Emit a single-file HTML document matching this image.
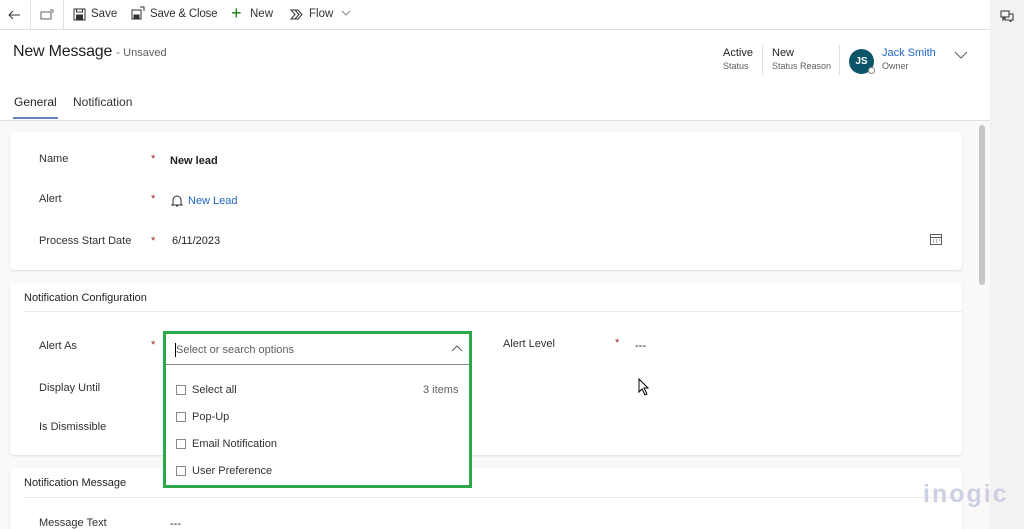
<!DOCTYPE html>
<html><head><style>
*{margin:0;padding:0;box-sizing:border-box}
html,body{width:1024px;height:529px;overflow:hidden}
body{font-family:"Liberation Sans",sans-serif;background:#faf9f8;position:relative;color:#323130}
.a{position:absolute}
.side{left:990px;top:0;width:34px;height:529px;background:#f3f2f1}
.top{left:0;top:0;width:990px;height:121px;background:#fff}
.cmd{left:0;top:0;width:990px;height:30px;border-bottom:1px solid #e1dfdd;font-size:11.5px;color:#323130}
.card{background:#fff;border-radius:4px;box-shadow:0 1px 2px rgba(0,0,0,.12)}
.lbl{font-size:11px;color:#323130}
.req{font-size:11px;color:#a4262c}
.val{font-size:11px;color:#201f1e}
.cb{width:10px;height:10px;border:1px solid #8a8886;left:10px}
</style></head><body>
<div class="a top"></div>
<div class="a side"></div>
<svg class="a" style="left:1000px;top:10px" width="14" height="12" viewBox="0 0 14 12" fill="none" stroke="#323130" stroke-width="1"><rect x="1" y="1" width="8" height="6"/><path d="M3 7v3l2-3"/><path d="M9 4h4v6h-2v2l-2-2H5V7"/></svg>
<div class="a cmd">
 <svg class="a" style="left:7px;top:8px" width="14" height="14" fill="none" stroke="#323130"><path d="M13 7H2M6 3L2 7l4 4"/></svg>
 <div class="a" style="left:30px;top:0;width:1px;height:30px;background:#e1dfdd"></div>
 <svg class="a" style="left:40px;top:9px" width="14" height="12" fill="none" stroke="#605e5c"><rect x="1" y="3" width="10" height="7"/><path d="M10 1l3 0M13 1v3"/></svg>
 <div class="a" style="left:63px;top:0;width:1px;height:30px;background:#e1dfdd"></div>
 <svg class="a" style="left:73px;top:8px" width="13" height="13" fill="none" stroke="#323130"><rect x="1" y="1" width="11" height="11"/><rect x="3.5" y="7" width="6" height="5" fill="#323130"/><rect x="3.5" y="1" width="6" height="3"/></svg>
 <span class="a" style="left:91px;top:8px">Save</span>
 <svg class="a" style="left:131px;top:6px" width="14" height="14" fill="none" stroke="#323130"><rect x="1" y="4" width="9" height="9"/><rect x="3" y="9" width="5" height="4" fill="#323130"/><path d="M9 1h4v4"/></svg>
 <span class="a" style="left:150px;top:8px;letter-spacing:-0.2px">Save &amp; Close</span>
 <span class="a" style="left:231px;top:3px;font-size:18px;color:#107c10">+</span>
 <span class="a" style="left:250px;top:8px">New</span>
 <svg class="a" style="left:290px;top:9px" width="14" height="11" fill="none" stroke="#323130"><path d="M1 1h7l4 4.5L8 10H1l4-4.5zM5 1l4 4.5L5 10"/></svg>
 <span class="a" style="left:309px;top:8px">Flow</span>
 <svg class="a" style="left:341px;top:10px" width="10" height="7" fill="none" stroke="#8a8886"><path d="M1 1l4 4 4-4"/></svg>
</div>
<div class="a" style="left:13px;top:43px;font-size:16px;color:#201f1e;letter-spacing:-0.2px">New Message <span style="font-size:11px;color:#605e5c;letter-spacing:0">- Unsaved</span></div>
<div class="a" style="left:723px;top:47px;font-size:11px;color:#201f1e">Active<div style="font-size:9px;color:#605e5c;margin-top:2px">Status</div></div>
<div class="a" style="left:762px;top:45px;width:1px;height:30px;background:#e1dfdd"></div>
<div class="a" style="left:772px;top:47px;font-size:11px;color:#201f1e">New<div style="font-size:9px;color:#605e5c;margin-top:2px">Status Reason</div></div>
<div class="a" style="left:839px;top:45px;width:1px;height:30px;background:#e1dfdd"></div>
<div class="a" style="left:849px;top:49px;width:25px;height:25px;border-radius:50%;background:#0b556a;color:#fff;font-size:10px;font-weight:bold;text-align:center;line-height:25px">JS</div>
<div class="a" style="left:868px;top:67px;width:7px;height:7px;border-radius:50%;background:#fff;border:1px solid #8a8886"></div>
<div class="a" style="left:882px;top:47px;font-size:11px;color:#2266c8">Jack Smith<div style="font-size:9px;color:#605e5c;margin-top:2px">Owner</div></div>
<svg class="a" style="left:954px;top:51px" width="14" height="8" fill="none" stroke="#605e5c"><path d="M1 1l6 6 6-6"/></svg>
<div class="a" style="left:14px;top:95px;font-size:12px;color:#201f1e">General</div>
<div class="a" style="left:13px;top:117px;width:45px;height:2px;background:#6b7fc4"></div>
<div class="a" style="left:73px;top:95px;font-size:12px;color:#323130">Notification</div>
<div class="a" style="left:0;top:120px;width:990px;height:1px;background:#e1dfdd"></div>
<div class="a" style="left:979px;top:125px;width:6px;height:160px;border-radius:3px;background:#c8c6c4"></div>

<div class="a card" style="left:10px;top:132px;width:952px;height:138px">
 <span class="a lbl" style="left:29px;top:21px">Name</span><span class="a req" style="left:141px;top:21px">*</span><span class="a val" style="left:160px;top:23px;font-weight:bold">New lead</span>
 <span class="a lbl" style="left:29px;top:61px">Alert</span><span class="a req" style="left:141px;top:61px">*</span>
 <svg class="a" style="left:161px;top:62px" width="12" height="13" fill="none" stroke="#323130"><path d="M2 10V6a4 4 0 0 1 8 0v4l1 1H1zM5 12h2"/></svg>
 <span class="a val" style="left:178px;top:63px;color:#2266c8">New Lead</span>
 <span class="a lbl" style="left:29px;top:103px">Process Start Date</span><span class="a req" style="left:141px;top:103px">*</span><span class="a val" style="left:162px;top:103px">6/11/2023</span>
 <svg class="a" style="left:920px;top:101px" width="12" height="12" fill="none" stroke="#605e5c"><rect x="0.5" y="1.5" width="11" height="10"/><path d="M0.5 4.5h11M3 7h1M6 7h1M9 7h1M3 9h1M6 9h1"/></svg>
</div>
<div class="a card" style="left:10px;top:283px;width:952px;height:172px">
 <span class="a" style="left:14px;top:9px;font-size:11px;color:#201f1e">Notification Configuration</span>
 <div class="a" style="left:14px;top:28px;width:938px;height:1px;background:#edebe9"></div>
 <span class="a lbl" style="left:29px;top:57px">Alert As</span><span class="a req" style="left:141px;top:56px">*</span>
 <span class="a lbl" style="left:29px;top:99px">Display Until</span>
 <span class="a lbl" style="left:29px;top:138px">Is Dismissible</span>
 <span class="a lbl" style="left:493px;top:55px">Alert Level</span><span class="a req" style="left:605px;top:54px">*</span><span class="a val" style="left:625px;top:57px">---</span>
</div>
<svg class="a" style="left:638px;top:378px" width="12" height="18"><path d="M1 1v13l3-3 3 6 2-1-3-6h4z" fill="#fff" stroke="#000"/></svg>
<div class="a card" style="left:10px;top:468px;width:952px;height:70px">
 <span class="a" style="left:14px;top:9px;font-size:11px;color:#201f1e">Notification Message</span>
 <div class="a" style="left:14px;top:29px;width:938px;height:1px;background:#edebe9"></div>
 <span class="a lbl" style="left:29px;top:49px">Message Text</span><span class="a val" style="left:160px;top:50px">---</span>
</div>
<div class="a" style="left:163px;top:331px;width:309px;height:157px;border:3px solid #2ea64a;background:#fff">
 <div class="a" style="left:0;top:0;width:303px;height:31px;border-bottom:1px solid #8a8886"></div>
 <div class="a" style="left:9px;top:9px;width:1px;height:14px;background:#000"></div>
 <span class="a" style="left:10px;top:10px;font-size:11px;color:#605e5c">Select or search options</span>
 <svg class="a" style="left:285px;top:11px" width="12" height="7" fill="none" stroke="#605e5c"><path d="M1 6l5-5 5 5"/></svg>
 <div class="a cb" style="top:51px"></div><span class="a val" style="left:26px;top:50px;color:#323130">Select all</span><span class="a val" style="left:257px;top:50px;color:#605e5c">3 items</span>
 <div class="a cb" style="top:78px"></div><span class="a val" style="left:26px;top:77px;color:#323130">Pop-Up</span>
 <div class="a cb" style="top:105px"></div><span class="a val" style="left:26px;top:104px;color:#323130">Email Notification</span>
 <div class="a cb" style="top:132px"></div><span class="a val" style="left:26px;top:131px;color:#323130">User Preference</span>
</div>
<div class="a" style="left:923px;top:480px;font-size:25px;font-weight:bold;color:#ccd0e2;letter-spacing:2px">inogic</div>
</body></html>
